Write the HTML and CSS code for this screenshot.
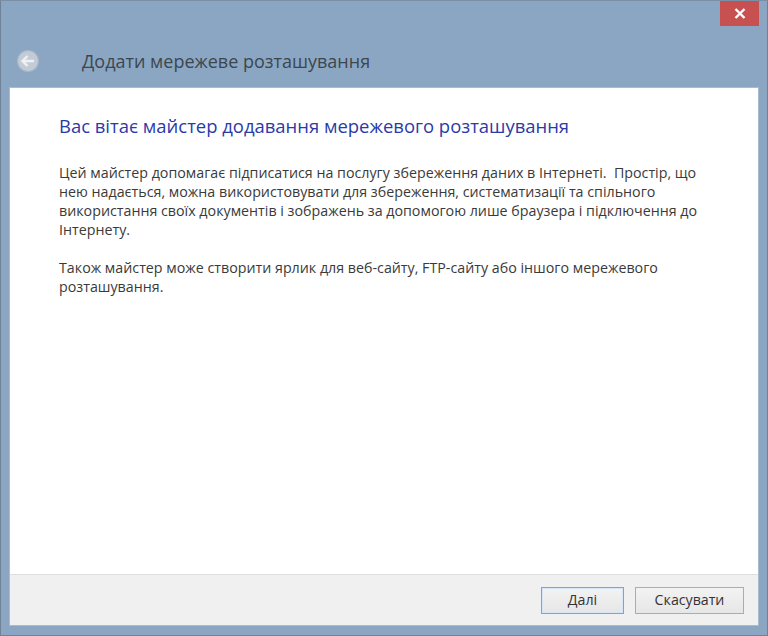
FILE: index.html
```html
<!DOCTYPE html>
<html lang="uk">
<head>
<meta charset="utf-8">
<title>Додати мережеве розташування</title>
<link rel="stylesheet" href="styles.css">
</head>
<body>
<div class="window">
  <div class="titlebar">
    <button class="close" aria-label="Закрити">
      <svg width="12" height="11" viewBox="0 0 12 11"><path d="M1.5 1 L10.5 10 M10.5 1 L1.5 10" stroke="#fff" stroke-width="2.4" fill="none"/></svg>
    </button>
  </div>
  <div class="navbar">
    <span class="back">
      <svg width="24" height="24" viewBox="0 0 24 24"><circle cx="12" cy="12" r="10.5" fill="#c3ccd6" stroke="#a9b6c6" stroke-width="1.2"/><path d="M6.5 12 H18 M11.5 7 L6.5 12 L11.5 17" stroke="#eef1f4" stroke-width="2.4" fill="none"/></svg>
    </span>
    <span class="wizard-title">Додати мережеве розташування</span>
  </div>
  <div class="panel">
    <div class="content">
      <h1 class="heading">Вас вітає майстер додавання мережевого розташування</h1>
      <p class="text">Цей майстер допомагає підписатися на послугу збереження даних в Інтернеті.&nbsp; Простір, що<br>нею надається, можна використовувати для збереження, систематизації та спільного<br>використання своїх документів і зображень за допомогою лише браузера і підключення до<br>Інтернету.</p>
      <p class="text">Також майстер може створити ярлик для веб-сайту, FTP-сайту або іншого мережевого<br>розташування.</p>
    </div>
    <div class="footer">
      <button class="btn btn-default">Далі</button>
      <button class="btn">Скасувати</button>
    </div>
  </div>
</div>
</body>
</html>
```
FILE: styles.css
```css
* { box-sizing: border-box; }
html, body { margin: 0; padding: 0; height: 100%; }
body { font-family: "Open Sans", "Noto Sans", sans-serif; background: #8ba6c2; overflow: hidden; }
.window {
  width: 768px; height: 636px;
  display: flex; flex-direction: column;
  background: #8ba6c2;
  border: 1px solid #6f8298;
  border-top-color: #7a8ea6;
  padding: 0 9px 10px;
}
.titlebar { height: 26px; display: flex; justify-content: flex-end; flex: none; }
.close {
  width: 39px; height: 25px; margin: 0 -1px 0 0; padding: 0; border: 0;
  background: #c75050;
  display: flex; align-items: center; justify-content: center;
}
.navbar { height: 61px; flex: none; display: flex; align-items: center; padding: 6px 0 0 6px; }
.back { width: 24px; height: 24px; display: block; }
.back svg { display: block; }
.wizard-title { margin-left: 42px; font-size: 18px; color: #3c4650; white-space: nowrap; }
.panel { flex: 1; background: #fff; display: flex; flex-direction: column; box-shadow: 0 0 0 1px #a9bbcf; }
.content { flex: 1; padding: 26px 20px 0 49px; }
.heading { margin: 0 0 25px; font-size: 18.45px; line-height: 24px; font-weight: 400; color: #2a3aa8; white-space: nowrap; }
.text { margin: 0 0 19px; font-size: 14.26px; line-height: 19px; color: #3a3a3a; white-space: nowrap; }
.footer {
  height: 51px; flex: none; background: #f0f0f0; border-top: 1px solid #dfdfdf;
  display: flex; justify-content: flex-end; align-items: flex-start; gap: 11px;
  padding: 12px 14px 0 0;
}
.btn {
  width: 109px; height: 27px; padding: 0 0 2px;
  font-family: inherit; font-size: 14.2px; color: #333;
  background: linear-gradient(#f3f3f3, #e6e6e6);
  border: 1px solid #acacac;
}
.btn-default { width: 83px; border-color: #6fa8e8; box-shadow: inset 0 0 0 1px #d6e6f8; }
```
